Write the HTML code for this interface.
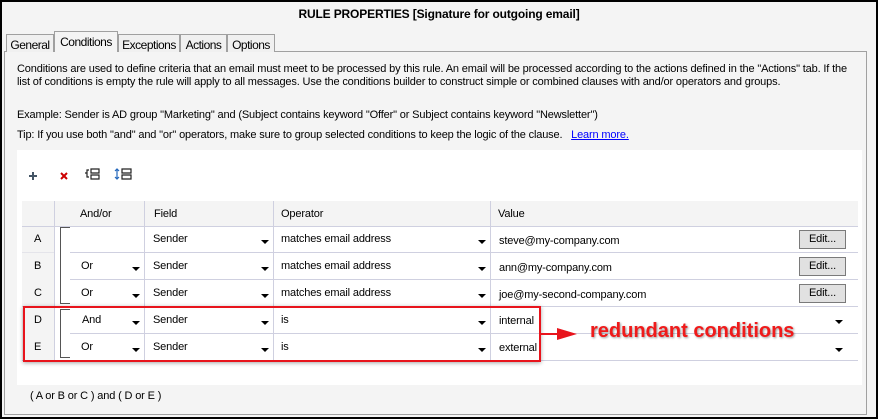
<!DOCTYPE html>
<html><head><meta charset="utf-8"><style>
*{margin:0;padding:0;box-sizing:border-box}
body{width:878px;height:419px;background:#f4f4f4;font-family:"Liberation Sans",sans-serif;font-size:11px;color:#000;position:relative;overflow:hidden;letter-spacing:-0.15px}
.a{position:absolute;white-space:nowrap}
.outer{position:absolute;left:0;top:0;width:878px;height:419px;border:2px solid #000}
.tab{position:absolute;top:34px;height:18px;border:1px solid #a0a0a0;border-bottom:none;background:#f0f0f0;padding-top:3px;font-size:12px;text-align:center;letter-spacing:-0.5px}
.panel{position:absolute;left:4px;top:51px;width:863px;height:364px;border:1px solid #a0a0a0;background:#f4f4f4}
.grid{position:absolute;left:17px;top:150px;width:845px;height:235px;background:#fff}
.hl{position:absolute;height:1px;background:#cfd0e0}
.vl{position:absolute;width:1px;background:#cfd0e0}
.t{position:absolute;font-size:11px;white-space:nowrap}
.dd{position:absolute;width:0;height:0;border-left:4px solid transparent;border-right:4px solid transparent;border-top:4px solid #000}
.btn{position:absolute;left:799px;width:47px;height:19px;border:1px solid #7a7a7a;background:#e1e1e1;text-align:center;line-height:17px;font-size:11px}
</style></head><body>
<div class="outer"></div>
<div class="a" style="left:0;width:878px;text-align:center;top:7px;font-weight:bold;font-size:12px">RULE PROPERTIES [Signature for outgoing email]</div>
<div class="panel"></div>
<div class="tab" style="left:6px;width:48px">General</div>
<div class="tab" style="left:54px;top:31px;height:21px;width:64px;background:#f4f4f4;z-index:2">Conditions</div>
<div class="tab" style="left:118px;width:62px">Exceptions</div>
<div class="tab" style="left:180px;width:47px">Actions</div>
<div class="tab" style="left:227px;width:48px">Options</div>
<div class="a" style="left:17px;top:63px;line-height:13px">Conditions are used to define criteria that an email must meet to be processed by this rule. An email will be processed according to the actions defined in the "Actions" tab. If the<br>list of conditions is empty the rule will apply to all messages. Use the conditions builder to construct simple or combined clauses with and/or operators and groups.</div>
<div class="a" style="left:17px;top:109px">Example: Sender is AD group "Marketing" and (Subject contains keyword "Offer" or Subject contains keyword "Newsletter")</div>
<div class="a" style="left:17px;top:129px">Tip: If you use both "and" and "or" operators, make sure to group selected conditions to keep the logic of the clause. &nbsp;&nbsp;<span style="color:#00f;text-decoration:underline">Learn more.</span></div>
<div class="grid"></div>
<svg class="a" style="left:25px;top:166px" width="120" height="20">
<path d="M8 6v8M4 10h8" stroke="#445566" stroke-width="2"/>
<path d="M36 7l6 6M42 7l-6 6" stroke="#cc0000" stroke-width="2"/>
<path d="M64 4h-2v3h-2h2v4h2M66 3h8v4h-8zM66 9h8v4h-8z" stroke="#222" fill="none" stroke-width="1.2"/>
<path d="M92 3v10M90 5l2-2l2 2M90 11l2 2l2-2" stroke="#2266bb" fill="none" stroke-width="1.2"/>
<path d="M97 3h9v4h-9zM97 9h9v4h-9z" stroke="#222" fill="none" stroke-width="1.2"/>
</svg>
<div class="a" style="left:22px;top:201px;width:836px;height:25px;background:#f4f4f4"></div>
<div class="a" style="left:22px;top:226px;width:32px;height:134px;background:#f4f4f4"></div>
<div class="hl" style="left:22px;top:226px;width:836px"></div>
<div class="hl" style="left:144px;top:252px;width:714px"></div>
<div class="hl" style="left:70px;top:252px;width:74px"></div>
<div class="hl" style="left:22px;top:252px;width:32px;background:#e4e4ea"></div>
<div class="hl" style="left:70px;top:279px;width:788px"></div>
<div class="hl" style="left:22px;top:306px;width:836px"></div>
<div class="hl" style="left:70px;top:333px;width:788px"></div>
<div class="hl" style="left:22px;top:360px;width:836px"></div>
<div class="vl" style="left:54px;top:201px;height:160px"></div>
<div class="vl" style="left:144px;top:201px;height:160px"></div>
<div class="vl" style="left:273px;top:201px;height:160px"></div>
<div class="vl" style="left:490px;top:201px;height:160px"></div>
<div class="t" style="left:80px;top:208px">And/or</div>
<div class="t" style="left:154px;top:208px">Field</div>
<div class="t" style="left:281px;top:208px">Operator</div>
<div class="t" style="left:498px;top:208px">Value</div>
<div class="a" style="left:60px;top:227px;width:10px;height:77px;border:1px solid #555;border-right:none"></div>
<div class="a" style="left:60px;top:309px;width:10px;height:49px;border:1px solid #555;border-right:none"></div>
<div class="t" style="left:34px;top:233px">A</div>
<div class="t" style="left:34px;top:260px">B</div>
<div class="t" style="left:34px;top:287px">C</div>
<div class="t" style="left:34px;top:314px">D</div>
<div class="t" style="left:34px;top:341px">E</div>
<div class="t" style="left:81px;top:260px">Or</div><div class="dd" style="left:132px;top:267px"></div>
<div class="t" style="left:81px;top:287px">Or</div><div class="dd" style="left:132px;top:294px"></div>
<div class="t" style="left:82px;top:314px">And</div><div class="dd" style="left:132px;top:321px"></div>
<div class="t" style="left:81px;top:341px">Or</div><div class="dd" style="left:132px;top:348px"></div>
<div class="t" style="left:153px;top:233px">Sender</div><div class="dd" style="left:261px;top:240px"></div>
<div class="t" style="left:153px;top:260px">Sender</div><div class="dd" style="left:261px;top:267px"></div>
<div class="t" style="left:153px;top:287px">Sender</div><div class="dd" style="left:261px;top:294px"></div>
<div class="t" style="left:153px;top:314px">Sender</div><div class="dd" style="left:261px;top:321px"></div>
<div class="t" style="left:153px;top:341px">Sender</div><div class="dd" style="left:261px;top:348px"></div>
<div class="t" style="left:281px;top:233px">matches email address</div><div class="dd" style="left:478px;top:240px"></div>
<div class="t" style="left:281px;top:260px">matches email address</div><div class="dd" style="left:478px;top:267px"></div>
<div class="t" style="left:281px;top:287px">matches email address</div><div class="dd" style="left:478px;top:294px"></div>
<div class="t" style="left:281px;top:314px">is</div><div class="dd" style="left:478px;top:321px"></div>
<div class="t" style="left:281px;top:341px">is</div><div class="dd" style="left:478px;top:348px"></div>
<div class="t" style="left:499px;top:235px">steve@my-company.com</div>
<div class="t" style="left:499px;top:262px">ann@my-company.com</div>
<div class="t" style="left:499px;top:289px">joe@my-second-company.com</div>
<div class="t" style="left:499px;top:315px">internal</div><div class="dd" style="left:835px;top:320px"></div>
<div class="t" style="left:499px;top:342px">external</div><div class="dd" style="left:835px;top:348px"></div>
<div class="btn" style="top:230px">Edit...</div>
<div class="btn" style="top:257px">Edit...</div>
<div class="btn" style="top:284px">Edit...</div>
<div class="a" style="left:23px;top:306px;width:518px;height:56px;border:2px solid #e8141c;box-shadow:0 1px 4px rgba(0,0,0,.35)"></div>
<div class="a" style="left:541px;top:333px;width:18px;height:2px;background:#e8141c"></div>
<div class="a" style="left:557px;top:328px;width:0;height:0;border-top:6px solid transparent;border-bottom:6px solid transparent;border-left:20px solid #e8141c"></div>
<div class="a" style="left:590px;top:320px;color:#f01a1a;font-size:20px;font-weight:bold;letter-spacing:0;text-shadow:1px 1px 2px rgba(0,0,0,.4)">redundant conditions</div>
<div class="a" style="left:30px;top:390px">( A or B or C ) and ( D or E )</div>
</body></html>
